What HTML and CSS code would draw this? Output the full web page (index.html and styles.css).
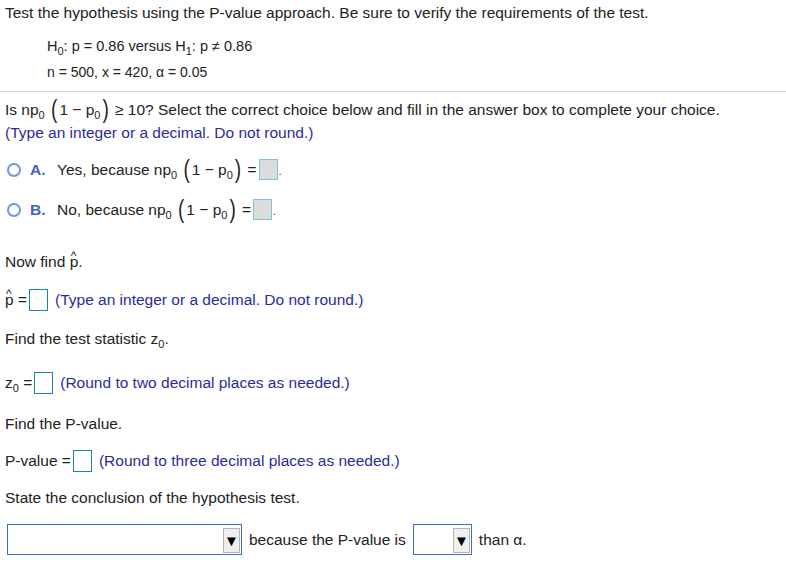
FILE: index.html
```html
<!DOCTYPE html>
<html>
<head>
<meta charset="utf-8">
<link rel="stylesheet" href="styles.css">
</head>
<body>
<div class="page">
  <div class="row r1">Test the hypothesis using the P-value approach. Be sure to verify the requirements of the test.</div>
  <div class="row r2 indent math1">H<sub class="s">0</sub>: p = 0.86 versus H<sub class="s">1</sub>: p ≠ 0.86</div>
  <div class="row r3 indent math2">n = 500, x = 420, α = 0.05</div>
  <div class="rule"></div>
  <div class="row r4">Is np<sub class="s">0</sub> <span class="paren">(</span>1 − p<sub class="s">0</sub><span class="paren">)</span> ≥ 10? Select the correct choice below and fill in the answer box to complete your choice.</div>
  <div class="row r5 hint">(Type an integer or a decimal. Do not round.)</div>
  <div class="choice c1"><span class="radio"></span><span class="letter">A.</span>Yes, because np<sub class="s">0</sub> <span class="paren">(</span>1 − p<sub class="s">0</sub><span class="paren">)</span> =<span class="box gray"></span><span class="dot">.</span></div>
  <div class="choice c2"><span class="radio"></span><span class="letter">B.</span>No, because np<sub class="s">0</sub> <span class="paren">(</span>1 − p<sub class="s">0</sub><span class="paren">)</span> =<span class="box gray"></span><span class="dot">.</span></div>
  <div class="row r6">Now find <span class="hat">p</span>.</div>
  <div class="row ans r7"><span class="hat">p</span> =<span class="box"></span><span class="hint">(Type an integer or a decimal. Do not round.)</span></div>
  <div class="row r8">Find the test statistic z<sub class="s">0</sub>.</div>
  <div class="row ans r9">z<sub class="s">0</sub> =<span class="box"></span><span class="hint">(Round to two decimal places as needed.)</span></div>
  <div class="row r10">Find the P-value.</div>
  <div class="row ans r11">P-value =<span class="box"></span><span class="hint">(Round to three decimal places as needed.)</span></div>
  <div class="row r12">State the conclusion of the hypothesis test.</div>
  <div class="selrow">
    <span class="select wide"><span class="arrow">▼</span></span>
    <span class="seltext">because the P-value is</span>
    <span class="select narrow"><span class="arrow">▼</span></span>
    <span class="seltext">than α.</span>
  </div>
</div>
</body>
</html>
```

FILE: styles.css
```css
html, body {
  margin: 0;
  padding: 0;
  background: #ffffff;
}
.page {
  font-family: "Liberation Sans", Arial, sans-serif;
  font-size: 15.5px;
  color: #222222;
  padding-left: 5px;
}
.row {
  height: 20px;
  line-height: 20px;
  white-space: nowrap;
}
.indent { padding-left: 42px; }
.math1 { font-size: 14.5px; }
.math2 { font-size: 14px; }
.s {
  font-size: 11px;
  position: relative;
  top: 4px;
  vertical-align: baseline;
  line-height: 0;
}
.paren {
  display: inline-block;
  font-size: 19px;
  transform: scaleY(1.35);
  line-height: 20px;
  position: relative;
  top: 1px;
  margin: 0 2px;
}
.r1 { margin-top: 3px; }
.r2 { margin-top: 13px; }
.r3 { margin-top: 6px; }
.rule {
  margin-top: 9px;
  margin-left: -5px;
  height: 1px;
  background: #d4d4d4;
}
.r4 { margin-top: 7px; }
.r5 { margin-top: 4px; }
.hint { color: #2b2b9e; }
.choice {
  height: 30px;
  line-height: 30px;
  white-space: nowrap;
}
.c1 { margin-top: 12px; }
.c2 { margin-top: 10px; }
.radio {
  display: inline-block;
  vertical-align: middle;
  width: 14px;
  height: 14px;
  border: 2px solid #7196dc;
  border-radius: 50%;
  box-sizing: border-box;
  margin-left: 2px;
  margin-right: 9px;
  position: relative;
  top: -1px;
}
.letter {
  display: inline-block;
  color: #3d63c0;
  font-weight: bold;
  width: 27px;
}
.box {
  display: inline-block;
  vertical-align: middle;
  width: 19px;
  height: 22px;
  box-sizing: border-box;
  border: 1px solid #1f86a0;
  background: #fff;
  margin: 0 7px 0 2px;
  position: relative;
  top: -1px;
}
.box.gray {
  width: 19px;
  height: 21px;
  border: 1px solid #7cc4d6;
  background: #dcdcdc;
  margin: 0 1px 0 2px;
}
.dot { font-size: 11px; }
.ans { height: 24px; line-height: 24px; }
.r6 { margin-top: 27px; }
.r7 { margin-top: 16px; }
.r8 { margin-top: 17px; }
.r9 { margin-top: 22px; }
.r10 { margin-top: 19px; }
.r11 { margin-top: 15px; }
.r12 { margin-top: 15px; }
.hat {
  position: relative;
  display: inline-block;
}
.hat::before {
  content: "^";
  position: absolute;
  left: 1px;
  top: -6px;
  font-size: 12px;
}
.selrow {
  margin-top: 16px;
  margin-left: 2px;
  display: flex;
  align-items: center;
  white-space: nowrap;
}
.select {
  height: 31px;
  box-sizing: border-box;
  border: 1px solid #3f6ec6;
  background: #fff;
  display: flex;
  justify-content: flex-end;
  align-items: center;
  padding-right: 1px;
}
.wide { width: 235px; }
.narrow { width: 59px; }
.arrow {
  width: 17px;
  height: 25px;
  box-sizing: border-box;
  border: 1px solid #b5b5b5;
  background: #efefef;
  color: #000;
  font-size: 15px;
  display: flex;
  align-items: center;
  justify-content: center;
  margin-top: 1px;
}
.seltext {
  margin: 0 7px 0 7px;
}
```
